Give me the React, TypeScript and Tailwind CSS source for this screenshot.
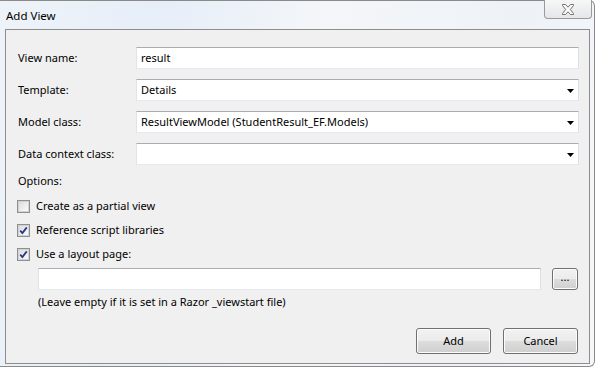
import React from "react";

const font = { fontFamily: '"Noto Sans", "Open Sans", sans-serif' };

function TextBox({ value, className = "" }: { value?: string; className?: string }) {
  return (
    <div
      className={`flex h-[22px] items-center border border-t-[#abadb3] border-r-[#dbdfe6] border-b-[#e3e9ef] border-l-[#e2e3ea] bg-white pl-[4px] text-[11px] text-black ${className}`}
    >
      {value}
    </div>
  );
}

function Combo({ value }: { value?: string }) {
  return (
    <div className="flex h-[22px] flex-1 items-center justify-between border border-t-[#abadb3] border-r-[#dbdfe6] border-b-[#e3e9ef] border-l-[#e2e3ea] bg-white pl-[4px] pr-[4px] text-[11px] text-black">
      <span>{value}</span>
      <svg width="7" height="4" viewBox="0 0 7 4" className="mt-[1px]">
        <path d="M0 0h7L3.5 4z" fill="#000" />
      </svg>
    </div>
  );
}

function Row({ label, children }: { label: string; children: React.ReactNode }) {
  return (
    <div className="flex h-[22px] items-center">
      <div className="w-[118px] text-[11px] text-black">{label}</div>
      {children}
    </div>
  );
}

function CheckBox({ checked, label }: { checked?: boolean; label: string }) {
  return (
    <div className="-ml-[1px] flex h-[16px] items-center gap-[6px]">
      <div className="flex h-[13px] w-[13px] items-center justify-center border border-[#8e8f8f] bg-white">
        <div className="relative h-[11px] w-[11px] border border-[#d0d2d5] bg-gradient-to-br from-[#dcdcdc] to-[#fbfbfb]">
          {checked && (
            <svg width="11" height="11" viewBox="0 0 11 11" className="absolute -left-[1px] -top-[1px]">
              <path d="M2.2 5.6L4.4 8L8.8 2.4" fill="none" stroke="#2b3785" strokeWidth="1.8" />
            </svg>
          )}
        </div>
      </div>
      <span className="text-[11px] text-black">{label}</span>
    </div>
  );
}

function Button({ children, className = "" }: { children: React.ReactNode; className?: string }) {
  return (
    <div
      className={`flex items-center justify-center rounded-[3px] border border-[#707070] bg-[linear-gradient(#f2f2f2_0%,#ebebeb_50%,#dddddd_50%,#cfcfcf_100%)] text-[11px] text-black shadow-[inset_0_0_0_1px_#fcfcfc] ${className}`}
    >
      {children}
    </div>
  );
}

export default function App() {
  return (
    <div className="h-[369px] w-[597px] bg-white" style={font}>
      <div className="flex h-[367px] w-[595px] flex-col rounded-br-[6px] rounded-tr-[6px] border-b border-r border-t border-[#8a8a8a] bg-[linear-gradient(100deg,#eef3f9_0%,#e6eef8_25%,#f4f6f9_50%,#eef2f7_80%,#f5f7fa_100%)]">
        <div className="flex h-[28px] items-start justify-between">
          <span className="pl-[6px] pt-[6px] text-[11.5px] text-black">Add View</span>
          <div className="-mt-[1px] mr-[2px] flex h-[19px] w-[48px] items-center justify-center rounded-b-[4px] border border-t-0 border-[#9a9a9a] bg-[linear-gradient(#f7f7f7,#e4e6e9)]">
            <svg width="14" height="11" viewBox="0 0 14 11">
              <path
                d="M1.5 0.5h3l2.5 2.7 2.5-2.7h3v1l-3.2 4 3.2 4v1h-3L7 7.8 4.5 10.5h-3v-1l3.2-4-3.2-4z"
                fill="#fbfbfb"
                stroke="#6f6f6f"
                strokeWidth="1"
                strokeLinejoin="round"
              />
            </svg>
          </div>
        </div>

        <div className="ml-[5px] flex h-[335px] w-[585px] flex-col border border-[#8d8d8d] bg-[#f0f0f0] pl-[12px] pr-[10px] pt-[17px] pb-[9px]">
          <div className="flex flex-col gap-[10px]">
            <Row label="View name:">
              <TextBox value="result" className="flex-1" />
            </Row>
            <Row label="Template:">
              <Combo value="Details" />
            </Row>
            <Row label="Model class:">
              <Combo value="ResultViewModel (StudentResult_EF.Models)" />
            </Row>
            <Row label="Data context class:">
              <Combo />
            </Row>
          </div>

          <div className="mt-[8px] h-[16px] text-[11px] leading-[16px] text-black">Options:</div>

          <div className="mt-[9px] flex flex-col gap-[8px]">
            <CheckBox label="Create as a partial view" />
            <CheckBox checked label="Reference script libraries" />
            <CheckBox checked label="Use a layout page:" />
          </div>

          <div className="ml-[20px] mt-[6px] flex items-center gap-[11px] pr-[1px]">
            <TextBox className="flex-1" />
            <Button className="h-[22px] w-[26px] pb-[3px] text-[10px]">...</Button>
          </div>
          <div className="ml-[20px] mt-[4px] h-[16px] text-[11px] leading-[16px] text-black">
            (Leave empty if it is set in a Razor _viewstart file)
          </div>

          <div className="mt-auto flex justify-end gap-[12px] pr-[1px]">
            <Button className="h-[26px] w-[75px]">Add</Button>
            <Button className="h-[26px] w-[75px]">Cancel</Button>
          </div>
        </div>
      </div>
    </div>
  );
}
